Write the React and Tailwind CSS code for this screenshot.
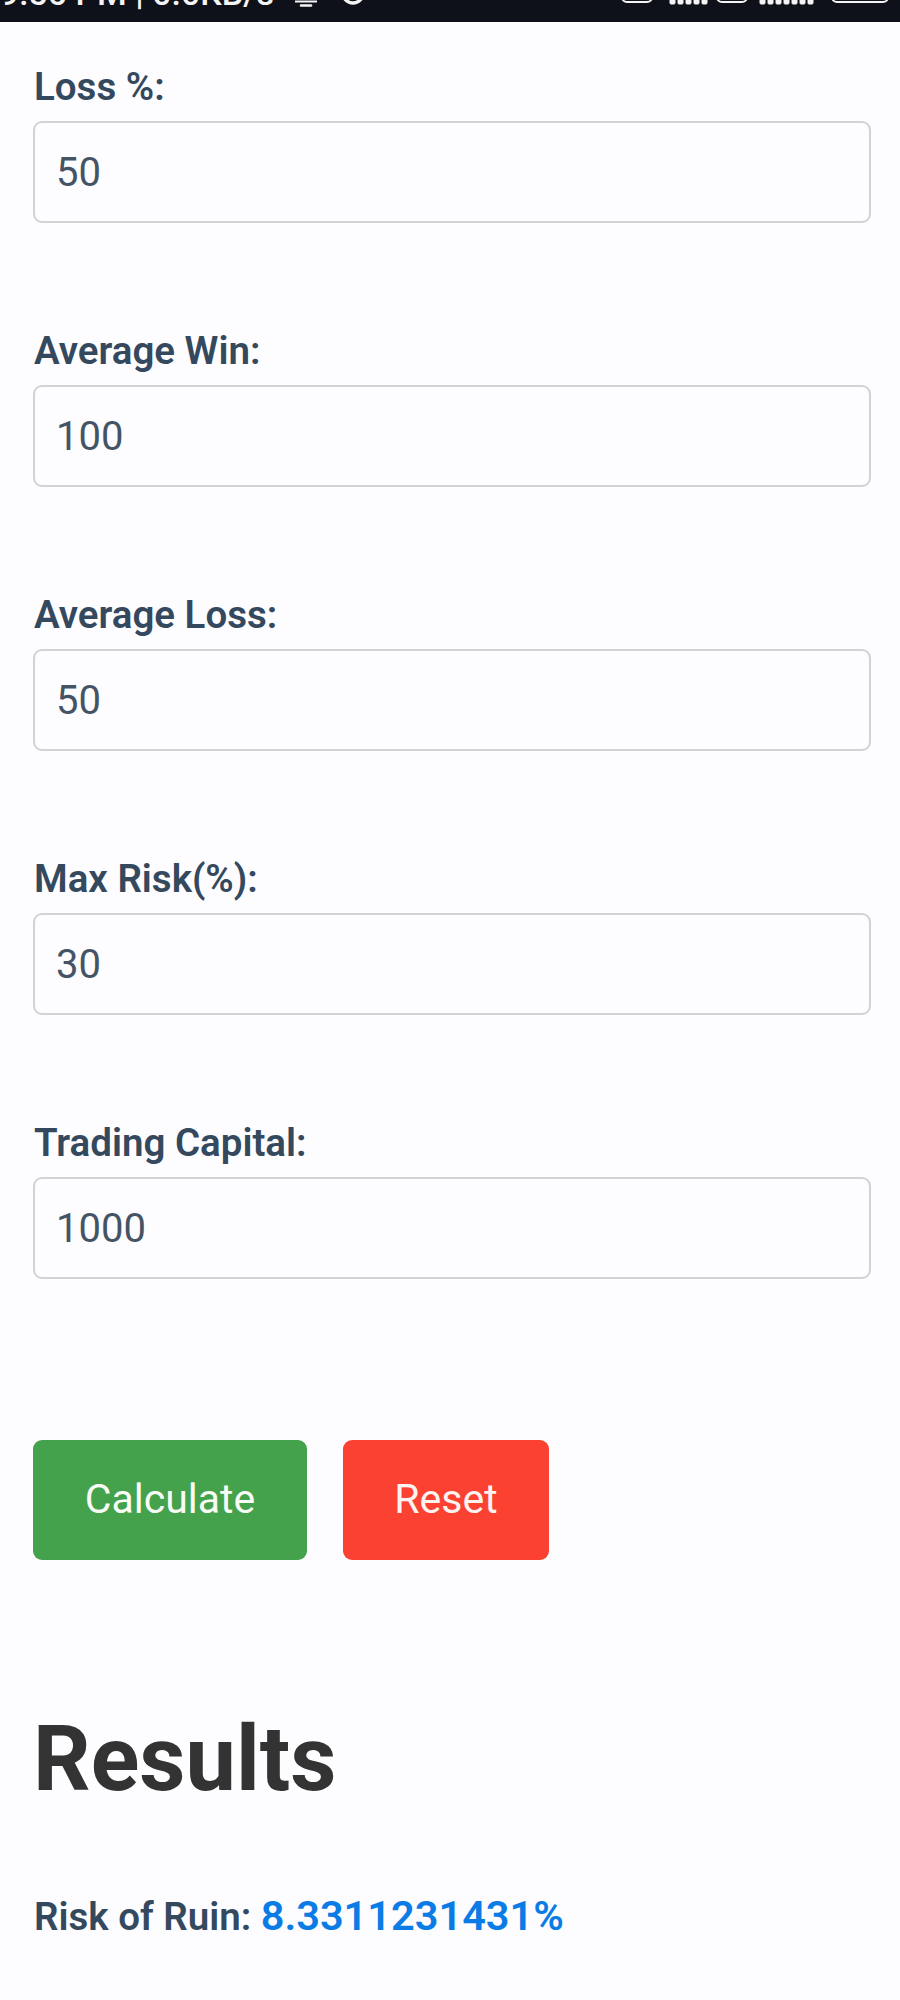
import React from "react";

const fields = [
  { label: "Loss %:", value: "50" },
  { label: "Average Win:", value: "100" },
  { label: "Average Loss:", value: "50" },
  { label: "Max Risk(%):", value: "30" },
  { label: "Trading Capital:", value: "1000" },
];

const SignalBars = ({ x, count }) => {
  return Array.from({ length: count }).map((_, i) => (
    <rect key={i} x={x + i * 8} y="-6" width="5" height="10" rx="1" fill="#f4f4f4" />
  ));
};

const StatusBar = () => {
  return (
    <div className="h-[22px] bg-[#0f111a] overflow-hidden flex text-[#f4f4f4]">
      <div className="w-[290px] shrink-0 text-[34px] leading-[34px] mt-[-24px] font-medium whitespace-nowrap">
        9:56 PM | 0.0KB/s
      </div>
      {/* alarm and sync icons, only their lower edge is on screen */}
      <svg width="80" height="22" className="shrink-0" fill="none" stroke="#f4f4f4">
        <path d="M5 1.5H27" strokeWidth="2" />
        <path d="M11 5.5H21" strokeWidth="2.5" strokeLinecap="round" />
        <circle cx="63" cy="-7" r="10" strokeWidth="3.5" />
      </svg>
      {/* sim, signal and battery icons */}
      <svg width="530" height="22" className="shrink-0" fill="none" stroke="#f4f4f4">
        <rect x="252" y="-10" width="30" height="12" rx="5" strokeWidth="2" />
        <SignalBars x={300} count={5} />
        <rect x="347" y="-10" width="30" height="12" rx="5" strokeWidth="2" />
        <SignalBars x={390} count={7} />
        <rect x="462" y="-10" width="56" height="12" rx="5" strokeWidth="2" />
      </svg>
    </div>
  );
};

const App = () => {
  return (
    <div className="min-h-[2000px] bg-[#fdfcfe] font-['Roboto',sans-serif]">
      <StatusBar />
      <div className="px-[33px]">
        {fields.map((field, i) => (
          <div key={field.label} className={i === 0 ? "pt-[42px]" : "pt-[105px]"}>
            <label className="block pl-[1px] text-[38.5px] leading-[46px] font-semibold text-[#34495e] mb-[11px]">
              {field.label}
            </label>
            <input
              readOnly
              value={field.value}
              className="block w-[838px] h-[102px] px-[21px] text-[40px] text-[#455464] bg-[#fdfcfe] border-2 border-[#d2d2d4] rounded-[9px] outline-none"
            />
          </div>
        ))}
        <div className="flex gap-[36px] mt-[161px]">
          <button className="w-[274px] h-[120px] bg-[#43a24b] text-[#f8fbf6] text-[41px] rounded-[9px]">
            Calculate
          </button>
          <button className="w-[206px] h-[120px] bg-[#fb4232] text-[#fdf3f0] text-[41px] rounded-[9px]">
            Reset
          </button>
        </div>
        <h2 className="mt-[147px] text-[90px] leading-[106px] font-bold text-[#333333]">Results</h2>
        <p className="mt-[80px] pl-[1px] text-[38.5px] leading-[46px] font-semibold text-[#34495e]">
          Risk of Ruin: <span className="text-[41.5px] text-[#0b7ce6]">8.3311231431%</span>
        </p>
      </div>
    </div>
  );
};

export default App;
